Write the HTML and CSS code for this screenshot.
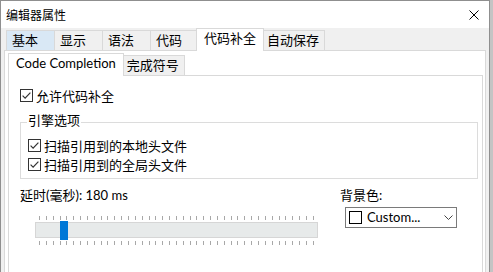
FILE: index.html
```html
<!DOCTYPE html>
<html lang="zh-CN">
<head>
<meta charset="utf-8">
<title>编辑器属性</title>
<link rel="stylesheet" href="styles.css">
</head>
<body>
<div class="window">
  <div class="titlebar">
    <span class="title">编辑器属性</span>
    <svg class="close" viewBox="0 0 10 10" width="10" height="10"><path d="M0.5 0.5 L9.5 9.5 M9.5 0.5 L0.5 9.5" stroke="#000" stroke-width="1" fill="none"/></svg>
  </div>
  <div class="main">
    <div class="tabs">
      <div class="tab hover">基本</div>
      <div class="tab">显示</div>
      <div class="tab">语法</div>
      <div class="tab">代码</div>
      <div class="tab active">代码补全</div>
      <div class="tab">自动保存</div>
    </div>
    <div class="panel">
      <div class="tabs">
        <div class="tab active">Code Completion</div>
        <div class="tab">完成符号</div>
      </div>
      <div class="page">
        <label class="check">
          <svg class="box" viewBox="0 0 13 13" width="13" height="13"><rect x="0.5" y="0.5" width="12" height="12" fill="#fff" stroke="#333"/><polyline points="2.6,6.6 5.1,9.1 10.4,3.6" fill="none" stroke="#333" stroke-width="1.2"/></svg>
          <span>允许代码补全</span>
        </label>
        <fieldset class="group">
          <legend>引擎选项</legend>
          <label class="check tall">
            <svg class="box" viewBox="0 0 13 13" width="13" height="13"><rect x="0.5" y="0.5" width="12" height="12" fill="#fff" stroke="#333"/><polyline points="2.6,6.6 5.1,9.1 10.4,3.6" fill="none" stroke="#333" stroke-width="1.2"/></svg>
            <span>扫描引用到的本地头文件</span>
          </label>
          <label class="check tall">
            <svg class="box" viewBox="0 0 13 13" width="13" height="13"><rect x="0.5" y="0.5" width="12" height="12" fill="#fff" stroke="#333"/><polyline points="2.6,6.6 5.1,9.1 10.4,3.6" fill="none" stroke="#333" stroke-width="1.2"/></svg>
            <span>扫描引用到的全局头文件</span>
          </label>
        </fieldset>
        <div class="bottom">
          <div class="delay">
            <div class="label">延时(毫秒): 180 ms</div>
            <div class="slider">
              <div class="ticks"><span></span><span></span><span></span><span></span><span></span><span></span><span></span><span></span><span></span><span></span><span></span><span></span><span></span><span></span><span></span><span></span><span></span><span></span><span></span><span></span><span></span><span></span><span></span><span></span><span></span><span></span><span></span><span></span><span></span><span></span><span></span><span></span><span></span><span></span><span></span><span></span><span></span><span></span><span></span><span></span><span></span></div>
              <div class="track"><div class="thumb" style="left: 24px"></div></div>
              <div class="ticks"><span></span><span></span><span></span><span></span><span></span><span></span><span></span><span></span><span></span><span></span><span></span><span></span><span></span><span></span><span></span><span></span><span></span><span></span><span></span><span></span><span></span><span></span><span></span><span></span><span></span><span></span><span></span><span></span><span></span><span></span><span></span><span></span><span></span><span></span><span></span><span></span><span></span><span></span><span></span><span></span><span></span></div>
            </div>
          </div>
          <div class="colorcol">
            <div class="label">背景色:</div>
            <div class="combo">
              <span class="swatch"></span>
              <span class="combo-text">Custom...</span>
              <svg class="chev" viewBox="0 0 9 5" width="9" height="5"><polyline points="0.5,0.5 4.5,4.5 8.5,0.5" fill="none" stroke="#444" stroke-width="1"/></svg>
            </div>
          </div>
        </div>
      </div>
    </div>
  </div>
</div>
</body>
</html>
```
FILE: styles.css
```css
* { box-sizing: border-box; }
html, body { margin: 0; padding: 0; }
body {
  width: 493px;
  height: 272px;
  overflow: hidden;
  background: #c4c4c4;
  font-family: Lato, "Noto Sans CJK SC", sans-serif;
  font-size: 13px;
  color: #000;
}
.window {
  width: 490px;
  height: 320px;
  border: 1px solid #8f8f8f;
  border-bottom: none;
  background: #f0f0f0;
  display: flex;
  flex-direction: column;
}
.titlebar {
  flex: none;
  height: 27px;
  background: #fff;
  display: flex;
  align-items: center;
  justify-content: space-between;
  padding: 0 10px 0 5px;
  font-family: "Noto Sans CJK SC", sans-serif;
  font-size: 12px;
}
.close { display: block; }
.main {
  flex: 1;
  display: flex;
  flex-direction: column;
  padding: 0 3px;
}
.tabs {
  flex: none;
  display: flex;
  align-items: flex-end;
  height: 22px;
  margin-left: 2px;
}
.tab {
  height: 20px;
  min-width: 49px;
  padding: 0 5px;
  border: 1px solid #d9d9d9;
  border-bottom: none;
  background: #f0f0f0;
  margin-right: -1px;
  line-height: 18px;
  white-space: nowrap;
}
.tab.hover { background: #d9e8f5; }
.tab.active {
  height: 23px;
  margin: 0 -3px -1px -2px;
  padding: 0 7px;
  background: #fff;
  position: relative;
  z-index: 1;
}
.panel {
  flex: 1;
  width: 482px;
  border: 1px solid #d9d9d9;
  background: #fff;
  display: flex;
  flex-direction: column;
  padding: 2px 2px 0 3px;
}
.page {
  flex: 1;
  border: 1px solid #d9d9d9;
  padding: 11px 4px 0 11px;
}
.check {
  display: flex;
  align-items: center;
  gap: 3px;
  height: 17px;
}
.check.tall { height: 19px; }
.box { display: block; flex: none; }
.group {
  margin: 8px 0 0 0;
  padding: 4px 0 4px 7px;
  border: 1px solid #dcdcdc;
  min-width: 0;
}
.group legend {
  padding: 0 1px 3px;
  margin-left: -1px;
  line-height: 17px;
}
.bottom {
  display: flex;
  margin-top: 8px;
}
.delay {
  width: 320px;
  display: flex;
  flex-direction: column;
}
.label {
  height: 17px;
  line-height: 17px;
  white-space: nowrap;
}
.slider {
  width: 283px;
  margin: 12px 0 0 15px;
}
.ticks {
  display: flex;
  justify-content: space-between;
  height: 4px;
  margin: 0 4px;
}
.ticks span {
  width: 1px;
  background: #a8a8a8;
}
.track {
  position: relative;
  height: 16px;
  border: 1px solid #d6d6d6;
  background: #e7eaea;
  margin: 2px 0 3px;
}
.thumb {
  position: absolute;
  top: -2px;
  width: 8px;
  height: 19px;
  background: #0078d7;
}
.colorcol {
  display: flex;
  flex-direction: column;
}
.combo {
  margin: 3px 0 0 5px;
  width: 112px;
  height: 21px;
  border: 1px solid #7a7a7a;
  background: #fff;
  display: flex;
  align-items: center;
  padding: 0 3px;
}
.swatch {
  flex: none;
  width: 13px;
  height: 13px;
  border: 1px solid #000;
  background: #fff;
}
.combo-text {
  flex: 1;
  margin-left: 5px;
  line-height: 17px;
}
.chev { display: block; flex: none; }
```
